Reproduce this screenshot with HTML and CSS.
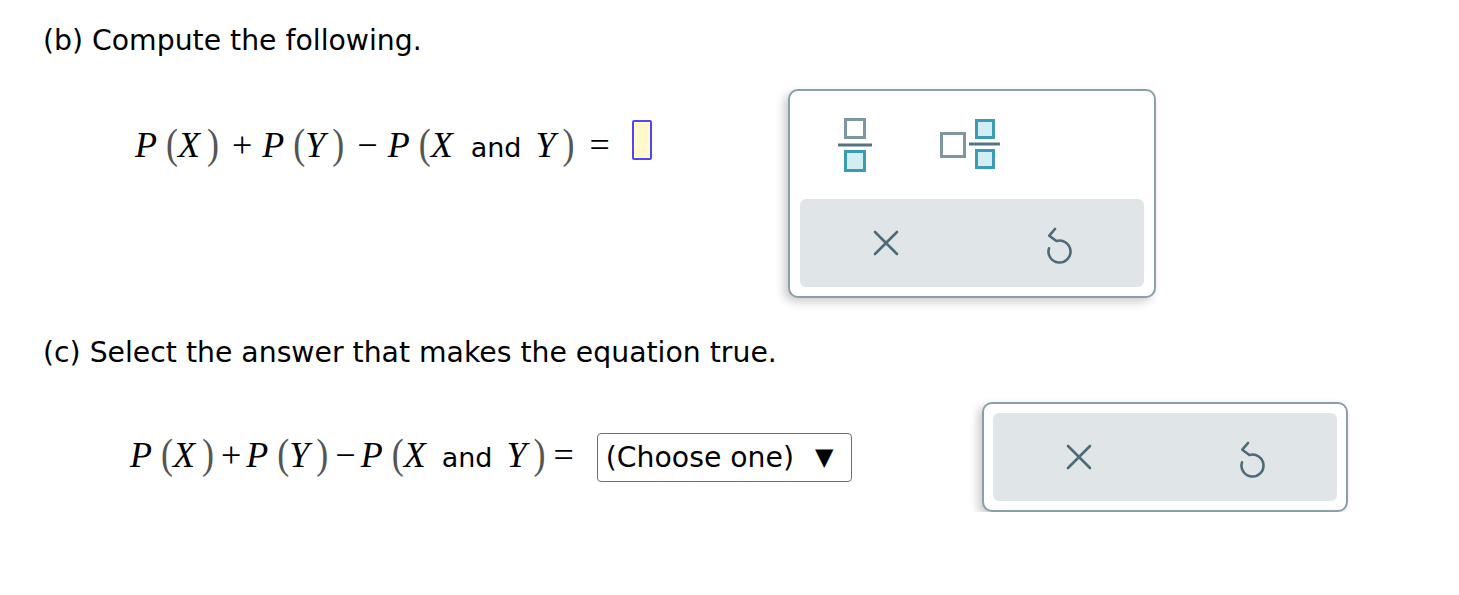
FILE: index.html
```html
<!DOCTYPE html>
<html lang="en">
<head>
<meta charset="utf-8">
<title>Probability</title>
<link rel="stylesheet" href="styles.css">
</head>
<body>
<div class="page">
  <section class="part part-b">
    <p class="prompt">(b) Compute the following.</p>
    <div class="row row-b">
      <div class="eq eq-b">
        <span class="math"><span class="mi">P</span><span class="pr po">(</span><span class="mi">X</span><span class="pr pc">)</span><span class="mo">+</span><span class="mi">P</span><span class="pr po">(</span><span class="mi">Y</span><span class="pr pc">)</span><span class="mo">−</span><span class="mi">P</span><span class="pr po">(</span><span class="mi">X</span><span class="txt">and</span><span class="mi">Y</span><span class="pr pc">)</span><span class="mo eqs">=</span></span><span class="answer-box"></span>
      </div>
      <div class="panel panel-b">
        <div class="tmpl-row">
          <button class="tmpl tmpl-frac" type="button" aria-label="fraction">
            <svg width="34" height="55" viewBox="0 0 34 55">
              <rect x="7.5" y="1.5" width="19" height="18" fill="#fff" stroke="#7d969f" stroke-width="3"/>
              <line x1="0" y1="27" x2="34" y2="27" stroke="#557380" stroke-width="3"/>
              <rect x="7.5" y="33.5" width="19" height="19" fill="#d3eef3" stroke="#3a9bb5" stroke-width="3"/>
            </svg>
          </button>
          <button class="tmpl tmpl-mixed" type="button" aria-label="mixed number">
            <svg width="60" height="52" viewBox="0 0 60 52">
              <rect x="1.5" y="14.5" width="23" height="23" fill="#fff" stroke="#7d969f" stroke-width="3"/>
              <rect x="36.5" y="1.5" width="17" height="17" fill="#d3eef3" stroke="#3a9bb5" stroke-width="3"/>
              <line x1="29" y1="25" x2="60" y2="25" stroke="#557380" stroke-width="3"/>
              <rect x="36.5" y="31.5" width="17" height="17" fill="#d3eef3" stroke="#3a9bb5" stroke-width="3"/>
            </svg>
          </button>
        </div>
        <div class="actions">
          <button class="act" type="button" aria-label="clear">
            <svg width="26" height="26" viewBox="0 0 26 26"><path d="M2 2 L24 24 M24 2 L2 24" stroke="#4c6b77" stroke-width="2.6" stroke-linecap="round" fill="none"/></svg>
          </button>
          <button class="act" type="button" aria-label="undo">
            <svg class="undo" width="30" height="40" viewBox="0 0 30 40"><path d="M11 3 L5.3 9.7 L12.4 15 A11 11 0 1 1 5 22.3" stroke="#4c6b77" stroke-width="2.6" stroke-linecap="round" stroke-linejoin="round" fill="none"/></svg>
          </button>
        </div>
      </div>
    </div>
  </section>

  <section class="part part-c">
    <p class="prompt">(c) Select the answer that makes the equation true.</p>
    <div class="row row-c">
      <div class="eq eq-c">
        <span class="math"><span class="mi">P</span><span class="pr po">(</span><span class="mi">X</span><span class="pr pc">)</span><span class="mo">+</span><span class="mi">P</span><span class="pr po">(</span><span class="mi">Y</span><span class="pr pc">)</span><span class="mo">−</span><span class="mi">P</span><span class="pr po">(</span><span class="mi">X</span><span class="txt">and</span><span class="mi">Y</span><span class="pr pc">)</span><span class="mo eqs">=</span></span>
        <span class="dropdown">(Choose one)<span class="caret">▼</span></span>
      </div>
      <div class="panel panel-c">
        <div class="actions">
          <button class="act" type="button" aria-label="clear">
            <svg width="26" height="26" viewBox="0 0 26 26"><path d="M2 2 L24 24 M24 2 L2 24" stroke="#4c6b77" stroke-width="2.6" stroke-linecap="round" fill="none"/></svg>
          </button>
          <button class="act" type="button" aria-label="undo">
            <svg class="undo" width="30" height="40" viewBox="0 0 30 40"><path d="M11 3 L5.3 9.7 L12.4 15 A11 11 0 1 1 5 22.3" stroke="#4c6b77" stroke-width="2.6" stroke-linecap="round" stroke-linejoin="round" fill="none"/></svg>
          </button>
        </div>
      </div>
    </div>
  </section>
</div>
</body>
</html>
```

FILE: styles.css
```css
html, body {
  margin: 0;
  padding: 0;
  background: #ffffff;
}

body {
  font-family: "DejaVu Sans", Verdana, sans-serif;
  color: #000;
}

.page {
  padding: 24px 0 0 43px;
}

.prompt {
  margin: 0;
  font-size: 28.3px;
  line-height: 34px;
}

.row {
  display: flex;
}

.row-b {
  margin-top: 31px;
  align-items: flex-start;
}

.eq-b {
  margin-left: 92px;
  width: 653px;
  margin-top: 31px;
  line-height: 50px;
  white-space: nowrap;
}

.math {
  font-family: "Liberation Serif", "Times New Roman", serif;
  font-size: 36px;
}

.mi {
  font-style: italic;
}

.pr {
  display: inline-block;
  line-height: 36px;
  color: #555;
  transform: scaleY(1.15);
  transform-origin: 50% 21px;
}

.po {
  margin-left: 9px;
}

.pc {
  margin-left: 7px;
}

.mo {
  margin: 0 10px 0 13px;
}

.txt {
  font-family: "DejaVu Sans", Verdana, sans-serif;
  font-size: 27px;
  margin: 0 14px 0 18px;
}

.eqs {
  margin: 0 22px 0 15px;
}

.answer-box {
  display: inline-block;
  width: 16px;
  height: 36px;
  border: 2px solid #5346f2;
  border-radius: 2px;
  background: #fff9cc;
  vertical-align: -3px;
}

.panel {
  border: 2px solid #8a9fa7;
  border-radius: 10px;
  background: #fff;
  box-shadow: -4px 4px 10px rgba(0, 0, 0, 0.2);
}

.panel-b {
  width: 344px;
  padding: 0 10px 9px 10px;
}

.tmpl-row {
  display: flex;
  gap: 5px;
  height: 108px;
  align-items: center;
}

.tmpl {
  width: 110px;
  height: 70px;
  border: 0;
  background: transparent;
  padding: 0;
  display: flex;
  align-items: center;
  justify-content: center;
}

.tmpl svg {
  display: block;
}

.actions {
  display: flex;
  height: 88px;
  background: #e0e5e8;
  border-radius: 6px;
}

.act {
  flex: 1;
  border: 0;
  background: transparent;
  padding: 0;
  display: flex;
  align-items: center;
  justify-content: center;
}

.act svg {
  display: block;
}

.undo {
  margin-top: 6px;
  margin-left: 2px;
}

.part-c .prompt {
  margin-top: 38px;
}

.row-c {
  margin-top: 32px;
  align-items: center;
}

.eq-c {
  margin-left: 87px;
  width: 852px;
  display: flex;
  align-items: baseline;
  white-space: nowrap;
}

.eq-c .mo {
  margin: 0 5px 0 7px;
}

.eq-c .txt {
  margin: 0 14px 0 16px;
}

.eq-c .eqs {
  margin: 0 23px 0 8px;
}

.dropdown {
  display: inline-flex;
  align-items: center;
  box-sizing: border-box;
  width: 255px;
  height: 49px;
  border: 1px solid #6f6f6f;
  border-radius: 4px;
  padding: 0 0 0 8px;
  font-family: "DejaVu Sans", Verdana, sans-serif;
  font-size: 28.3px;
}

.caret {
  margin-left: 21px;
  font-size: 24px;
}

.panel-c {
  width: 344px;
  padding: 9px;
}
```
